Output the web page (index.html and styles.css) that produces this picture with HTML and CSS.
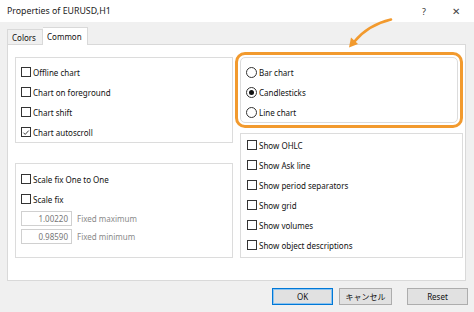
FILE: index.html
```html
<!DOCTYPE html>
<html>
<head>
<meta charset="utf-8">
<link rel="stylesheet" href="styles.css">
</head>
<body>
<div class="dialog">
  <div class="titlebar">
    <span class="title">Properties of EURUSD,H1</span>
    <span class="tb-btns"><span class="help">?</span><span class="close">✕</span></span>
  </div>
  <div class="tabs">
    <div class="tab">Colors</div>
    <div class="tab active">Common</div>
  </div>
  <div class="panel">
    <div class="col left">
      <div class="group g1">
        <div class="row"><span class="cb"></span>Offline chart</div>
        <div class="row"><span class="cb"></span>Chart on foreground</div>
        <div class="row"><span class="cb"></span>Chart shift</div>
        <div class="row"><span class="cb checked"><svg viewBox="0 0 10 10" class="tick"><path d="M1.8 5.2 L4 7.4 L8.4 2.6" fill="none" stroke="#222" stroke-width="1.1"/></svg></span>Chart autoscroll</div>
      </div>
      <div class="group g2">
        <div class="row"><span class="cb"></span>Scale fix One to One</div>
        <div class="row"><span class="cb"></span>Scale fix</div>
        <div class="irow"><span class="inp">1.00220</span><span class="dis">Fixed maximum</span></div>
        <div class="irow"><span class="inp">0.98590</span><span class="dis">Fixed minimum</span></div>
      </div>
    </div>
    <div class="col right">
      <div class="group g3">
        <div class="row"><span class="rb"></span>Bar chart</div>
        <div class="row"><span class="rb on"></span>Candlesticks</div>
        <div class="row"><span class="rb"></span>Line chart</div>
      </div>
      <div class="group g4">
        <div class="row"><span class="cb"></span>Show OHLC</div>
        <div class="row"><span class="cb"></span>Show Ask line</div>
        <div class="row"><span class="cb"></span>Show period separators</div>
        <div class="row"><span class="cb"></span>Show grid</div>
        <div class="row"><span class="cb"></span>Show volumes</div>
        <div class="row"><span class="cb"></span>Show object descriptions</div>
      </div>
    </div>
  </div>
  <div class="footer">
    <div class="btn ok">OK</div>
    <div class="btn cancel">キャンセル</div>
    <div class="btn reset">Reset</div>
  </div>
  <svg class="arrow" width="474" height="312" viewBox="0 0 474 312">
    <path d="M391 19.5 Q368 25 354.5 41.5" fill="none" stroke="#f29a2e" stroke-width="2.6" stroke-linecap="round"/>
    <polygon points="349,47.5 358,44 351,37.5" fill="#f29a2e"/>
  </svg>
</div>
</body>
</html>
```
FILE: styles.css
```css
html, body {
  margin: 0;
  padding: 0;
}
body {
  width: 474px;
  height: 312px;
  background: #f0f0f0;
  font-family: "Noto Sans", "Noto Sans CJK JP", sans-serif;
  font-size: 8px;
  color: #111;
  overflow: hidden;
}
.dialog {
  position: relative;
  width: 474px;
  height: 312px;
}
.titlebar {
  height: 22px;
  background: #fff;
  display: flex;
  align-items: center;
  justify-content: space-between;
  padding-left: 7px;
  box-sizing: border-box;
}
.title {
  font-size: 8.8px;
  color: #222;
}
.tb-btns {
  display: flex;
  align-items: center;
}
.help {
  width: 14px;
  text-align: center;
  margin-right: 18px;
  font-size: 9px;
  color: #333;
}
.close {
  width: 14px;
  text-align: center;
  margin-right: 11px;
  font-size: 10px;
  color: #444;
}
.tabs {
  height: 22px;
  display: flex;
  align-items: flex-end;
  padding-left: 7px;
}
.tab {
  height: 14px;
  line-height: 15px;
  padding: 0 4px;
  border: 1px solid #d9d9d9;
  border-bottom: none;
  background: #f0f0f0;
  width: 26px;
}
.tab.active {
  height: 17px;
  line-height: 18px;
  background: #fff;
  border-left: none;
  width: 36px;
  padding: 0 4px;
  position: relative;
  z-index: 1;
  margin-bottom: -1px;
}
.panel {
  margin-left: 7px;
  width: 459px;
  height: 237px;
  box-sizing: border-box;
  background: #fff;
  border: 1px solid #d9d9d9;
  padding: 12px 0 0 7px;
  display: flex;
  gap: 7px;
}
.col {
  display: flex;
  flex-direction: column;
}
.left {
  width: 218px;
  gap: 20px;
}
.right {
  width: 223px;
  gap: 10px;
}
.group {
  border: 1px solid #dcdcdc;
  box-sizing: border-box;
  display: flex;
  flex-direction: column;
  padding: 4px 0 0 5px;
}
.g1 { height: 86px; }
.g2 { height: 95px; padding-top: 5px; }
.g3 {
  width: 218px;
  height: 66px;
  outline: 3px solid #f29a2e;
  outline-offset: 2px;
  border-radius: 5px;
  padding-left: 5px;
}
.g4 { height: 125px; padding-top: 1px; padding-left: 6px; }
.row {
  height: 20px;
  display: flex;
  align-items: center;
  white-space: nowrap;
}
.cb {
  width: 10px;
  height: 10px;
  border: 1px solid #333;
  box-sizing: border-box;
  margin-right: 2px;
  flex: none;
  display: flex;
  align-items: center;
  justify-content: center;
  background: #fff;
}
.tick {
  width: 9px;
  height: 9px;
}
.rb {
  width: 11px;
  height: 11px;
  border: 1px solid #333;
  border-radius: 50%;
  box-sizing: border-box;
  margin-right: 2px;
  flex: none;
  display: flex;
  align-items: center;
  justify-content: center;
}
.rb.on::after {
  content: "";
  width: 5px;
  height: 5px;
  border-radius: 50%;
  background: #111;
}
.irow {
  height: 18px;
  display: flex;
  align-items: center;
}
.g2 .irow:first-of-type { margin-top: 4px; }
.inp {
  width: 51px;
  height: 15px;
  box-sizing: border-box;
  border: 1px solid #d0d0d0;
  color: #777;
  text-align: right;
  padding-right: 3px;
  line-height: 13px;
  font-size: 8px;
  margin-right: 5px;
}
.dis {
  color: #8a8a8a;
}
.footer {
  display: flex;
  padding-top: 7px;
  padding-left: 272px;
}
.btn {
  height: 17px;
  box-sizing: border-box;
  border: 1px solid #adadad;
  background: #e1e1e1;
  display: flex;
  align-items: center;
  justify-content: center;
  color: #111;
}
.ok {
  width: 61px;
  border: 1px solid #0078d7;
  box-shadow: inset 0 0 0 1px #8cc3ef;
}
.cancel {
  width: 53px;
  margin-left: 6px;
}
.reset {
  width: 61px;
  margin-left: 15px;
}
.arrow {
  position: absolute;
  left: 0;
  top: 0;
  pointer-events: none;
}
```
